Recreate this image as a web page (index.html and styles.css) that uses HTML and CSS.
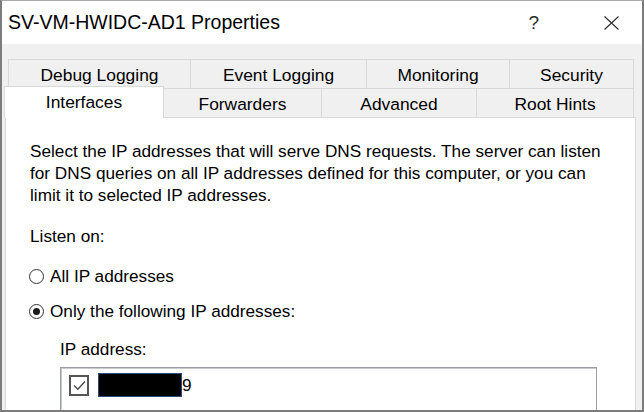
FILE: index.html
```html
<!DOCTYPE html>
<html lang="en">
<head>
<meta charset="utf-8">
<title>SV-VM-HWIDC-AD1 Properties</title>
<link rel="stylesheet" href="styles.css">
</head>
<body>
<div class="window">
  <div class="titlebar">
    <span class="title">SV-VM-HWIDC-AD1 Properties</span>
    <span class="help">?</span>
    <svg class="close" width="17" height="14" viewBox="0 0 17 14"><path d="M1.5 0.5 L15.5 13.5 M15.5 0.5 L1.5 13.5" stroke="#2b2b2b" stroke-width="1.1" fill="none"/></svg>
  </div>
  <div class="client">
    <div class="tabrow row1">
      <div class="tab w1">Debug Logging</div>
      <div class="tab w2">Event Logging</div>
      <div class="tab w3">Monitoring</div>
      <div class="tab w4">Security</div>
    </div>
    <div class="tabrow row2">
      <div class="tab selected w5">Interfaces</div>
      <div class="tab w6">Forwarders</div>
      <div class="tab w7">Advanced</div>
      <div class="tab w8">Root Hints</div>
    </div>
    <div class="panel">
      <p class="desc">Select the IP addresses that will serve DNS requests. The server can listen<br>for DNS queries on all IP addresses defined for this computer, or you can<br>limit it to selected IP addresses.</p>
      <p class="listen">Listen on:</p>
      <div class="radio first"><span class="circle"></span><span>All IP addresses</span></div>
      <div class="radio second"><span class="circle on"></span><span>Only the following IP addresses:</span></div>
      <p class="iplabel">IP address:</p>
      <div class="listbox">
        <div class="item">
          <span class="check"><svg width="15" height="15" viewBox="0 0 15 15"><path d="M2 7.5 L5.8 11.3 L13 3.5" stroke="#4a4a4a" stroke-width="1.4" fill="none"/></svg></span>
          <span class="redact"></span><span class="digit">9</span>
        </div>
      </div>
    </div>
  </div>
</div>
</body>
</html>
```
FILE: styles.css
```css
html, body {
  margin: 0;
  padding: 0;
  width: 644px;
  height: 412px;
  overflow: hidden;
  background: #ffffff;
}
body {
  font-family: "Liberation Sans", Arial, sans-serif;
  color: #000;
}
.window {
  box-sizing: border-box;
  width: 644px;
  height: 412px;
  border-top: 1px solid #a8a8a8;
  border-left: 2px solid #7c7c7c;
  border-right: 2px solid #7c7c7c;
  border-bottom: 2px solid #7c7c7c;
  display: flex;
  flex-direction: column;
  background: #f0f0f0;
}
.titlebar {
  height: 43px;
  background: #fff;
  display: flex;
  align-items: center;
  padding-left: 6px;
  padding-right: 22px;
  flex: none;
}
.title {
  font-size: 19.5px;
  color: #000;
}
.help {
  margin-left: auto;
  font-size: 19px;
  color: #2b2b2b;
  margin-right: 64px;
}
.close {
  display: block;
}
.client {
  flex: 1;
  display: flex;
  flex-direction: column;
  padding-top: 15px;
  min-height: 0;
}
.tabrow {
  display: flex;
  flex: none;
}
.row1 {
  margin-left: 6px;
  height: 29px;
}
.row2 {
  margin-left: 2px;
  margin-top: -2px;
  height: 32px;
  align-items: flex-start;
}
.tab {
  box-sizing: border-box;
  height: 29px;
  border: 1px solid #d9d9d9;
  border-bottom: none;
  background: #f0f0f0;
  font-size: 17.4px;
  display: flex;
  align-items: center;
  justify-content: center;
  padding-top: 3px;
  margin-left: -1px;
}
.row1 .tab:first-child { margin-left: 0; }
.row2 .tab { margin-top: 2px; }
.row2 .tab.selected {
  margin-top: 0;
  margin-left: 0;
  height: 32px;
  background: #fff;
  position: relative;
  z-index: 1;
  padding-top: 0;
}
.w1 { width: 183px; }
.w2 { width: 177px; }
.w3 { width: 144px; }
.w4 { width: 125px; }
.w5 { width: 160px; }
.w6 { width: 159px; }
.w7 { width: 156px; }
.w8 { width: 158px; }
.panel {
  flex: 1;
  min-height: 0;
  overflow: hidden;
  margin-top: -1px;
  margin-left: 3px;
  width: 631px;
  box-sizing: border-box;
  border: 1px solid #d9d9d9;
  border-bottom: none;
  background: #fff;
  padding: 22px 0 0 24px;
  font-size: 17.2px;
  line-height: 22px;
}
.panel p {
  margin: 0;
}
.listen {
  margin-top: 19px !important;
}
.radio {
  display: flex;
  align-items: center;
  height: 22px;
  margin-left: -1px;
}
.radio.first { margin-top: 18px; }
.radio.second { margin-top: 13px; }
.circle {
  box-sizing: border-box;
  width: 15px;
  height: 15px;
  border: 1px solid #333;
  border-radius: 50%;
  margin-right: 6px;
  display: flex;
  align-items: center;
  justify-content: center;
  background: #fff;
}
.circle.on::after {
  content: "";
  width: 7px;
  height: 7px;
  border-radius: 50%;
  background: #1a1a1a;
}
.iplabel {
  margin-top: 16px !important;
  margin-left: 30px !important;
}
.listbox {
  margin-top: 7px;
  margin-left: 30px;
  width: 537px;
  height: 80px;
  box-sizing: border-box;
  border: 1px solid #9b9ea4;
  box-shadow: inset 1px 1px 0 #c9cbcf;
  background: #fff;
}
.item {
  display: flex;
  align-items: center;
  padding-top: 4px;
  padding-left: 8px;
  height: 25px;
}
.check {
  box-sizing: border-box;
  width: 20px;
  height: 21px;
  border: 2px solid #555;
  display: flex;
  align-items: center;
  justify-content: center;
  margin-right: 9px;
  margin-top: 2px;
}
.check svg { display: block; }
.redact {
  box-sizing: border-box;
  width: 84px;
  height: 24px;
  background: #000;
  border: 1.5px solid #2c4a7e;
}
.digit {
  font-size: 17.2px;
}
```
